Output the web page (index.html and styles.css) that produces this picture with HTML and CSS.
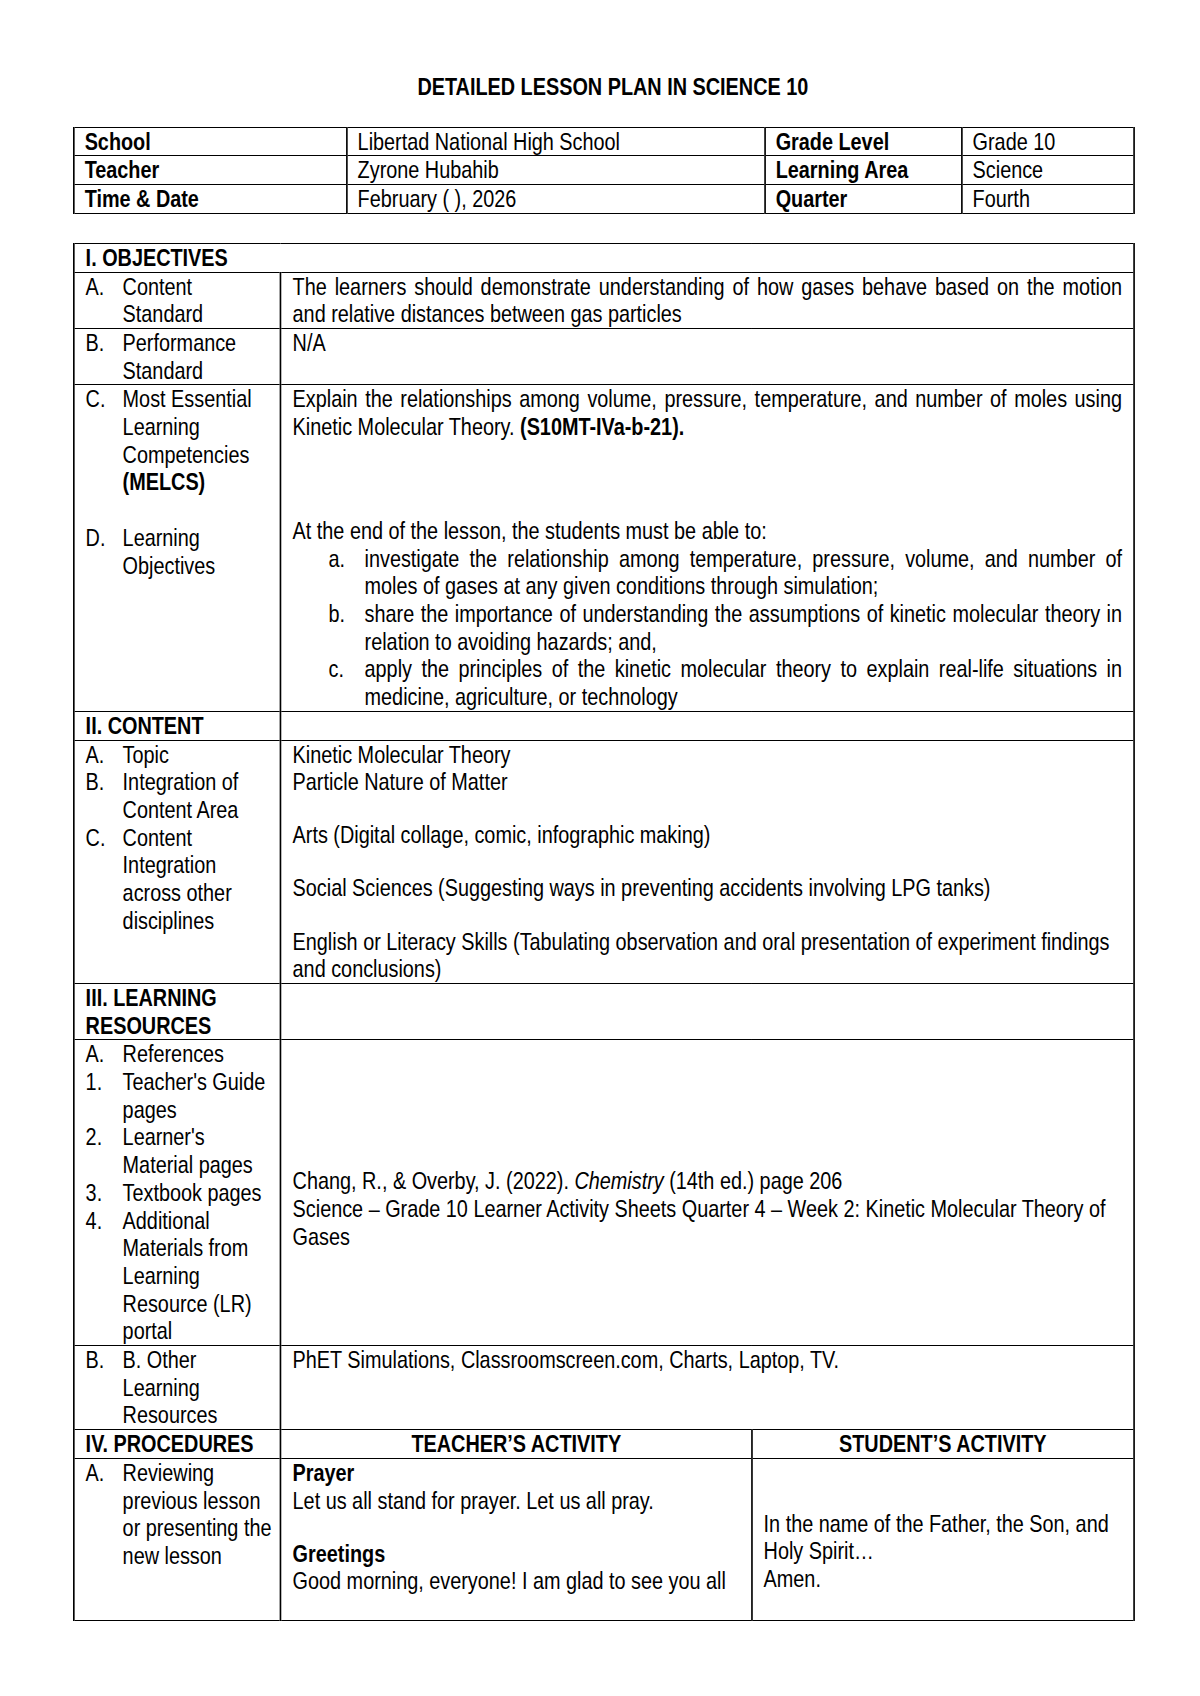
FILE: index.html
```html
<!DOCTYPE html>
<html lang="en">
<head>
<meta charset="utf-8">
<title>Detailed Lesson Plan in Science 10</title>
<link rel="stylesheet" href="styles.css">
</head>
<body>
<div class="page">
 <div class="sheet">
  <h1 class="title">DETAILED LESSON PLAN IN SCIENCE 10</h1>

  <table class="info">
    <colgroup><col class="i1"><col class="i2"><col class="i3"><col class="i4"></colgroup>
    <tr><th>School</th><td>Libertad National High School</td><th>Grade Level</th><td>Grade 10</td></tr>
    <tr><th>Teacher</th><td>Zyrone Hubahib</td><th>Learning Area</th><td>Science</td></tr>
    <tr><th>Time &amp; Date</th><td>February ( ), 2026</td><th>Quarter</th><td>Fourth</td></tr>
  </table>

  <table class="plan">
    <colgroup><col class="p1"><col class="p2"><col class="p3"></colgroup>
    <tr><td colspan="3" class="sec">I. OBJECTIVES</td></tr>
    <tr>
      <td class="lc"><div class="li"><span class="lb">A.</span><span class="lt">Content<br>Standard</span></div></td>
      <td colspan="2"><p class="j">The learners should demonstrate understanding of how gases behave based on the motion and relative distances between gas particles</p></td>
    </tr>
    <tr>
      <td class="lc"><div class="li"><span class="lb">B.</span><span class="lt">Performance<br>Standard</span></div></td>
      <td colspan="2"><p>N/A</p></td>
    </tr>
    <tr>
      <td class="lc">
        <div class="li"><span class="lb">C.</span><span class="lt">Most Essential<br>Learning<br>Competencies<br><b>(MELCS)</b></span></div>
        <div class="gapl"></div>
        <div class="li"><span class="lb">D.</span><span class="lt">Learning<br>Objectives</span></div>
      </td>
      <td colspan="2">
        <p class="j">Explain the relationships among volume, pressure, temperature, and number of moles using Kinetic Molecular Theory. <b>(S10MT-IVa-b-21).</b></p>
        <div class="gap"></div><div class="gap"></div><div class="gap"></div>
        <p>At the end of the lesson, the students must be able to:</p>
        <div class="ol">
          <div class="oi"><span class="ob">a.</span><span class="ot">investigate the relationship among temperature, pressure, volume, and number of moles of gases at any given conditions through simulation;</span></div>
          <div class="oi"><span class="ob">b.</span><span class="ot">share the importance of understanding the assumptions of kinetic molecular theory in relation to avoiding hazards; and,</span></div>
          <div class="oi"><span class="ob">c.</span><span class="ot">apply the principles of the kinetic molecular theory to explain real-life situations in medicine, agriculture, or technology</span></div>
        </div>
      </td>
    </tr>
    <tr><td class="sec">II. CONTENT</td><td colspan="2"></td></tr>
    <tr>
      <td class="lc">
        <div class="li"><span class="lb">A.</span><span class="lt">Topic</span></div>
        <div class="li"><span class="lb">B.</span><span class="lt">Integration of<br>Content Area</span></div>
        <div class="li"><span class="lb">C.</span><span class="lt">Content<br>Integration<br>across other<br>disciplines</span></div>
      </td>
      <td colspan="2">
        <p>Kinetic Molecular Theory<br>Particle Nature of Matter</p>
        <div class="gap"></div>
        <p>Arts (Digital collage, comic, infographic making)</p>
        <div class="gap"></div>
        <p>Social Sciences (Suggesting ways in preventing accidents involving LPG tanks)</p>
        <div class="gap"></div>
        <p>English or Literacy Skills (Tabulating observation and oral presentation of experiment findings and conclusions)</p>
      </td>
    </tr>
    <tr><td class="sec">III. LEARNING<br>RESOURCES</td><td colspan="2"></td></tr>
    <tr>
      <td class="lc">
        <div class="li"><span class="lb">A.</span><span class="lt">References</span></div>
        <div class="li"><span class="lb">1.</span><span class="lt">Teacher's Guide<br>pages</span></div>
        <div class="li"><span class="lb">2.</span><span class="lt">Learner's<br>Material pages</span></div>
        <div class="li"><span class="lb">3.</span><span class="lt">Textbook pages</span></div>
        <div class="li"><span class="lb">4.</span><span class="lt">Additional<br>Materials from<br>Learning<br>Resource (LR)<br>portal</span></div>
      </td>
      <td colspan="2">
        <div class="gap"></div><div class="gap"></div><div class="gap"></div><div class="gap"></div><div class="gap"></div>
        <p>Chang, R., &amp; Overby, J. (2022). <i>Chemistry</i> (14th ed.) page 206</p>
        <p>Science – Grade 10 Learner Activity Sheets Quarter 4 – Week 2: Kinetic Molecular Theory of Gases</p>
      </td>
    </tr>
    <tr>
      <td class="lc"><div class="li"><span class="lb">B.</span><span class="lt">B. Other<br>Learning<br>Resources</span></div></td>
      <td colspan="2"><p>PhET Simulations, Classroomscreen.com, Charts, Laptop, TV.</p></td>
    </tr>
    <tr>
      <td class="sec">IV. PROCEDURES</td>
      <td class="sec center">TEACHER’S ACTIVITY</td>
      <td class="sec center">STUDENT’S ACTIVITY</td>
    </tr>
    <tr>
      <td class="lc"><div class="li"><span class="lb">A.</span><span class="lt">Reviewing<br>previous lesson<br>or presenting the<br>new lesson</span></div></td>
      <td>
        <p><b>Prayer</b></p>
        <p>Let us all stand for prayer. Let us all pray.</p>
        <div class="gap"></div>
        <p><b>Greetings</b></p>
        <p>Good morning, everyone! I am glad to see you all</p>
        <div class="gap"></div>
      </td>
      <td>
        <div class="gap"></div><div class="gap"></div>
        <p>In the name of the Father, the Son, and<br>Holy Spirit…</p>
        <p>Amen.</p>
      </td>
    </tr>
  </table>
 </div>
</div>
</body>
</html>
```

FILE: styles.css
```css
* { box-sizing: border-box; }

html, body {
  margin: 0;
  padding: 0;
  background: #ffffff;
  overflow-x: hidden;
}

body {
  font-family: "Liberation Sans", Arial, sans-serif;
  font-size: 24.2px;
  line-height: 27.7px;
  color: #000000;
  width: 1200px;
  min-height: 1696px;
}

.page {
  width: 1072px;
  margin-left: 73px;
  padding-top: 73px;
  overflow: hidden;
}

/* The document font is a narrow face (82% of the regular width):
   the sheet is laid out at full width and condensed horizontally. */
.sheet {
  width: 1292.7px;
  transform: scaleX(0.82);
  transform-origin: 0 0;
}

.title {
  margin: 0 0 26px 0;
  padding-left: 24px;
  text-align: center;
  font-size: 24.2px;
  line-height: 27.7px;
  font-weight: bold;
}

table {
  border-collapse: collapse;
  table-layout: fixed;
  width: 1292.7px;
}

td, th {
  border-style: solid;
  border-color: #000;
  border-width: 1px 2px;
  padding: 0 12.2px;
  vertical-align: top;
  text-align: left;
  font-weight: normal;
}

.info .i1 { width: 332.9px; }
.info .i2 { width: 509.8px; }
.info .i3 { width: 240.2px; }
.info .i4 { width: 209.8px; }
.info th { font-weight: bold; }

.plan { margin-top: 29px; }
.plan .p1 { width: 252.4px; }
.plan .p2 { width: 574.4px; }
.plan .p3 { width: 465.9px; }
.plan td { padding: 0 13.4px; }

.sec { font-weight: bold; }
.center { text-align: center !important; }

p { margin: 0; }
.j { text-align: justify; }

.gap { height: 25.4px; }
.gapl { height: 27.7px; }

.li { display: flex; }
.lb { flex: none; width: 45.1px; }
.lt { white-space: nowrap; }

.ol { margin-left: 43.9px; }
.oi { display: flex; }
.ob { flex: none; width: 43.9px; }
.ot { flex: 1; text-align: justify; }
```
